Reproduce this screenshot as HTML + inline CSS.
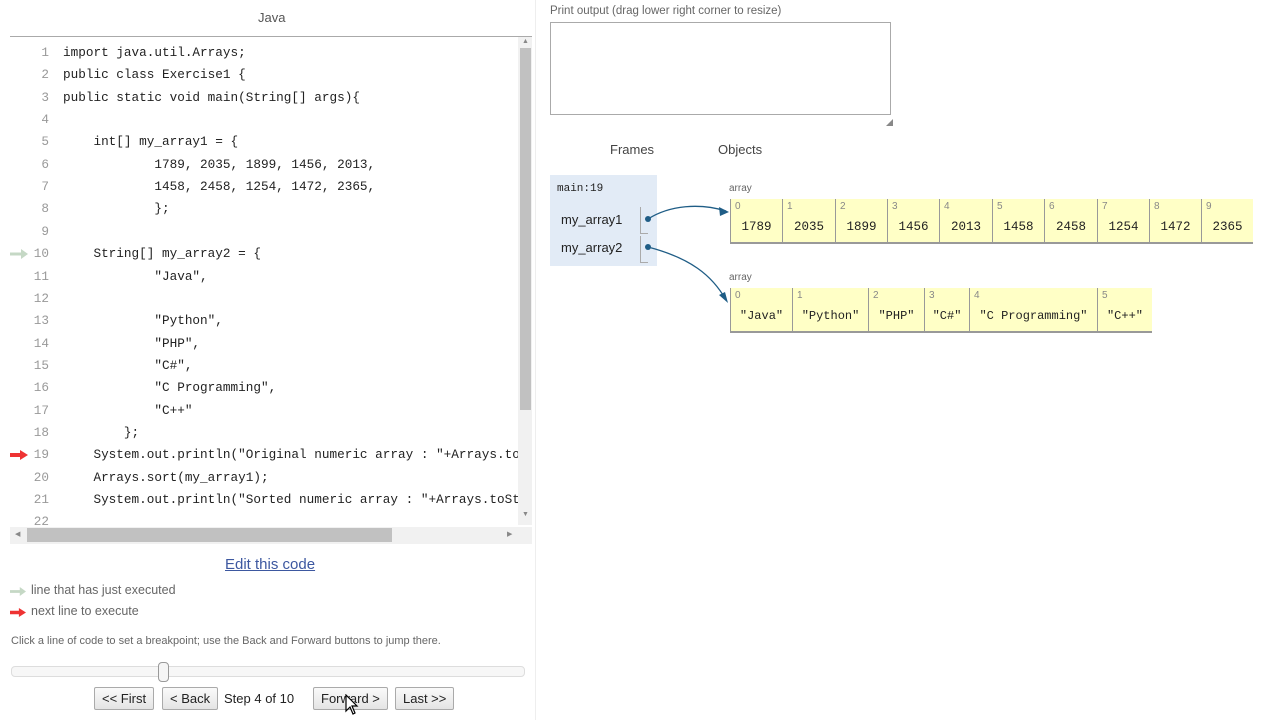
<!DOCTYPE html>
<html><head><meta charset="utf-8"><style>
*{margin:0;padding:0;box-sizing:border-box}
body{width:1280px;height:720px;background:#fff;position:relative;overflow:hidden;font-family:"Liberation Sans",sans-serif;color:#333}
.a{position:absolute}
.code{position:absolute;left:10px;top:42px;width:508px;height:483px;overflow:hidden;font-family:"Liberation Mono",monospace;font-size:12.7px;color:#222}
.ln{position:absolute;left:0;width:508px;height:22.35px;line-height:22.35px;white-space:pre}
.ln .n{position:absolute;right:469px;color:#999;text-align:right}
.ln .c{position:absolute;left:53px}
.ar{position:absolute;display:block;width:18px;height:10px}
.btn{position:absolute;top:687px;height:23px;border:1px solid #aaa;border-radius:2px;background:linear-gradient(#fafafa,#e4e4e4);font-size:13px;line-height:21px;padding:0 7px;color:#222}
.cell{position:absolute;top:0;height:45px;background:#ffffc6;border-left:1px solid #999;border-bottom:2px solid #999;font-family:"Liberation Mono",monospace}
.cell i{position:absolute;left:4px;top:2px;font-style:normal;font-size:10px;color:#888;font-family:"Liberation Sans",sans-serif}
.cell b{position:absolute;left:0;right:0;top:21px;text-align:center;font-weight:normal;font-size:12.5px;color:#222}
.cell.s b{font-size:12px}
</style></head><body>
<div class="a" style="left:258px;top:10px;font-size:13px;color:#555">Java</div>
<div class="a" style="left:10px;top:36px;width:522px;height:1px;background:#aaa"></div>
<div class="code">
<div class="ln" style="top:0"><span class="n">1</span><span class="c">import java.util.Arrays;</span></div>
<div class="ln" style="top:22.35px"><span class="n">2</span><span class="c">public class Exercise1 {</span></div>
<div class="ln" style="top:44.7px"><span class="n">3</span><span class="c">public static void main(String[] args){</span></div>
<div class="ln" style="top:67.05px"><span class="n">4</span><span class="c"></span></div>
<div class="ln" style="top:89.4px"><span class="n">5</span><span class="c">    int[] my_array1 = {</span></div>
<div class="ln" style="top:111.75px"><span class="n">6</span><span class="c">            1789, 2035, 1899, 1456, 2013,</span></div>
<div class="ln" style="top:134.1px"><span class="n">7</span><span class="c">            1458, 2458, 1254, 1472, 2365,</span></div>
<div class="ln" style="top:156.45px"><span class="n">8</span><span class="c">            };</span></div>
<div class="ln" style="top:178.8px"><span class="n">9</span><span class="c"></span></div>
<div class="ln" style="top:201.15px"><svg class="ar" style="left:0;top:6px" viewBox="0 0 18 10"><path d="M0 3.5 H11 V0 L18 5 L11 10 V6.5 H0 Z" fill="#c5d8c5"/></svg><span class="n">10</span><span class="c">    String[] my_array2 = {</span></div>
<div class="ln" style="top:223.5px"><span class="n">11</span><span class="c">            "Java",</span></div>
<div class="ln" style="top:245.85px"><span class="n">12</span><span class="c"></span></div>
<div class="ln" style="top:268.2px"><span class="n">13</span><span class="c">            "Python",</span></div>
<div class="ln" style="top:290.55px"><span class="n">14</span><span class="c">            "PHP",</span></div>
<div class="ln" style="top:312.9px"><span class="n">15</span><span class="c">            "C#",</span></div>
<div class="ln" style="top:335.25px"><span class="n">16</span><span class="c">            "C Programming",</span></div>
<div class="ln" style="top:357.6px"><span class="n">17</span><span class="c">            "C++"</span></div>
<div class="ln" style="top:379.95px"><span class="n">18</span><span class="c">        };</span></div>
<div class="ln" style="top:402.3px"><svg class="ar" style="left:0;top:6px" viewBox="0 0 18 10"><path d="M0 3 H10 V0 L18 5 L10 10 V7 H0 Z" fill="#e33"/></svg><span class="n">19</span><span class="c">    System.out.println("Original numeric array : "+Arrays.toString(my_array1));</span></div>
<div class="ln" style="top:424.65px"><span class="n">20</span><span class="c">    Arrays.sort(my_array1);</span></div>
<div class="ln" style="top:447px"><span class="n">21</span><span class="c">    System.out.println("Sorted numeric array : "+Arrays.toString(my_array1));</span></div>
<div class="ln" style="top:469.35px"><span class="n">22</span><span class="c"></span></div>
</div>
<div class="a" style="left:518px;top:37px;width:14px;height:488px;background:#f1f1f1"></div>
<div class="a" style="left:520px;top:48px;width:11px;height:362px;background:#c1c1c1"></div>
<div class="a" style="left:522px;top:38px;font-size:7px;color:#888">&#9650;</div>
<div class="a" style="left:522px;top:511px;font-size:7px;color:#888">&#9660;</div>
<div class="a" style="left:10px;top:527px;width:522px;height:17px;background:#f1f1f1"></div>
<div class="a" style="left:27px;top:528px;width:365px;height:14px;background:#c1c1c1"></div>
<div class="a" style="left:15px;top:530px;font-size:7px;color:#888">&#9664;</div>
<div class="a" style="left:507px;top:530px;font-size:7px;color:#888">&#9654;</div>
<div class="a" style="left:225px;top:556px;font-size:15px;color:#3d58a0;text-decoration:underline">Edit this code</div>
<svg class="a" style="left:10px;top:587px" width="16" height="9" viewBox="0 0 18 10"><path d="M0 3.5 H11 V0 L18 5 L11 10 V6.5 H0 Z" fill="#c5d8c5"/></svg>
<div class="a" style="left:31px;top:583px;font-size:12.5px;color:#666">line that has just executed</div>
<svg class="a" style="left:10px;top:608px" width="16" height="9" viewBox="0 0 18 10"><path d="M0 3 H10 V0 L18 5 L10 10 V7 H0 Z" fill="#e33"/></svg>
<div class="a" style="left:31px;top:604px;font-size:12.5px;color:#666">next line to execute</div>
<div class="a" style="left:11px;top:635px;font-size:11px;color:#666">Click a line of code to set a breakpoint; use the Back and Forward buttons to jump there.</div>
<div class="a" style="left:11px;top:666px;width:514px;height:11px;border:1px solid #ddd;border-radius:4px;background:#f7f7f7"></div>
<div class="a" style="left:158px;top:662px;width:11px;height:20px;border:1px solid #999;border-radius:4px;background:#f5f5f5"></div>
<div class="btn" style="left:94px">&lt;&lt; First</div>
<div class="btn" style="left:162px">&lt; Back</div>
<div class="a" style="left:224px;top:691px;font-size:13px;color:#222">Step 4 of 10</div>
<div class="btn" style="left:313px">Forward &gt;</div>
<div class="btn" style="left:395px">Last &gt;&gt;</div>
<svg class="a" style="left:345px;top:694px" width="14" height="22" viewBox="0 0 14 22"><path d="M1 1 L1 17 L5 13 L8 20 L10 19 L7 12 L12 12 Z" fill="#fff" stroke="#000" stroke-width="1.2"/></svg>
<div class="a" style="left:535px;top:0;width:1px;height:720px;background:#eee"></div>
<div class="a" style="left:550px;top:5px;font-size:11.5px;color:#666">Print output (drag lower right corner to resize)</div>
<div class="a" style="left:550px;top:22px;width:341px;height:93px;border:1px solid #aaa"></div>
<div class="a" style="left:886px;top:119px;width:0;height:0;border-left:7px solid transparent;border-bottom:7px solid #888"></div>
<div class="a" style="left:610px;top:142px;font-size:13px;color:#444">Frames</div>
<div class="a" style="left:718px;top:142px;font-size:13px;color:#444">Objects</div>
<div class="a" style="left:550px;top:175px;width:107px;height:91px;background:#e2ebf6"></div>
<div class="a" style="left:557px;top:183px;font-family:'Liberation Mono',monospace;font-size:11px;color:#222">main:19</div>
<div class="a" style="left:561px;top:212px;font-size:13px;color:#222">my_array1</div>
<div class="a" style="left:561px;top:240px;font-size:13px;color:#222">my_array2</div>
<div class="a" style="left:640px;top:207px;width:8px;height:27px;border-left:1px solid #aaa;border-bottom:1px solid #aaa"></div>
<div class="a" style="left:640px;top:236px;width:8px;height:27px;border-left:1px solid #aaa;border-bottom:1px solid #aaa"></div>
<svg class="a" style="left:0;top:0" width="1280" height="720"><g fill="none" stroke="#1f5d86" stroke-width="1.3"><path d="M648 219 C670 205 700 203 726 211"/><path d="M648 247 C690 258 712 275 726 300"/></g><g fill="#1f5d86"><circle cx="648" cy="219" r="3"/><circle cx="648" cy="247" r="3"/><path d="M729 212 L719 207 L720 216 Z"/><path d="M728 303 L719 295 L725 292 Z"/></g></svg>
<div class="a" style="left:729px;top:183px;font-size:10px;color:#666">array</div>
<div class="a" style="left:730px;top:199px;width:523px;height:45px">
<div class="cell" style="left:0;width:52px"><i>0</i><b>1789</b></div>
<div class="cell" style="left:52px;width:53px"><i>1</i><b>2035</b></div>
<div class="cell" style="left:105px;width:52px"><i>2</i><b>1899</b></div>
<div class="cell" style="left:157px;width:52px"><i>3</i><b>1456</b></div>
<div class="cell" style="left:209px;width:53px"><i>4</i><b>2013</b></div>
<div class="cell" style="left:262px;width:52px"><i>5</i><b>1458</b></div>
<div class="cell" style="left:314px;width:53px"><i>6</i><b>2458</b></div>
<div class="cell" style="left:367px;width:52px"><i>7</i><b>1254</b></div>
<div class="cell" style="left:419px;width:52px"><i>8</i><b>1472</b></div>
<div class="cell" style="left:471px;width:52px;border-right:0"><i>9</i><b>2365</b></div>
</div>
<div class="a" style="left:729px;top:272px;font-size:10px;color:#666">array</div>
<div class="a" style="left:730px;top:288px;width:422px;height:45px">
<div class="cell s" style="left:0;width:62px"><i>0</i><b>"Java"</b></div>
<div class="cell s" style="left:62px;width:76px"><i>1</i><b>"Python"</b></div>
<div class="cell s" style="left:138px;width:56px"><i>2</i><b>"PHP"</b></div>
<div class="cell s" style="left:194px;width:45px"><i>3</i><b>"C#"</b></div>
<div class="cell s" style="left:239px;width:128px"><i>4</i><b>"C Programming"</b></div>
<div class="cell s" style="left:367px;width:55px"><i>5</i><b>"C++"</b></div>
</div>
</body></html>
